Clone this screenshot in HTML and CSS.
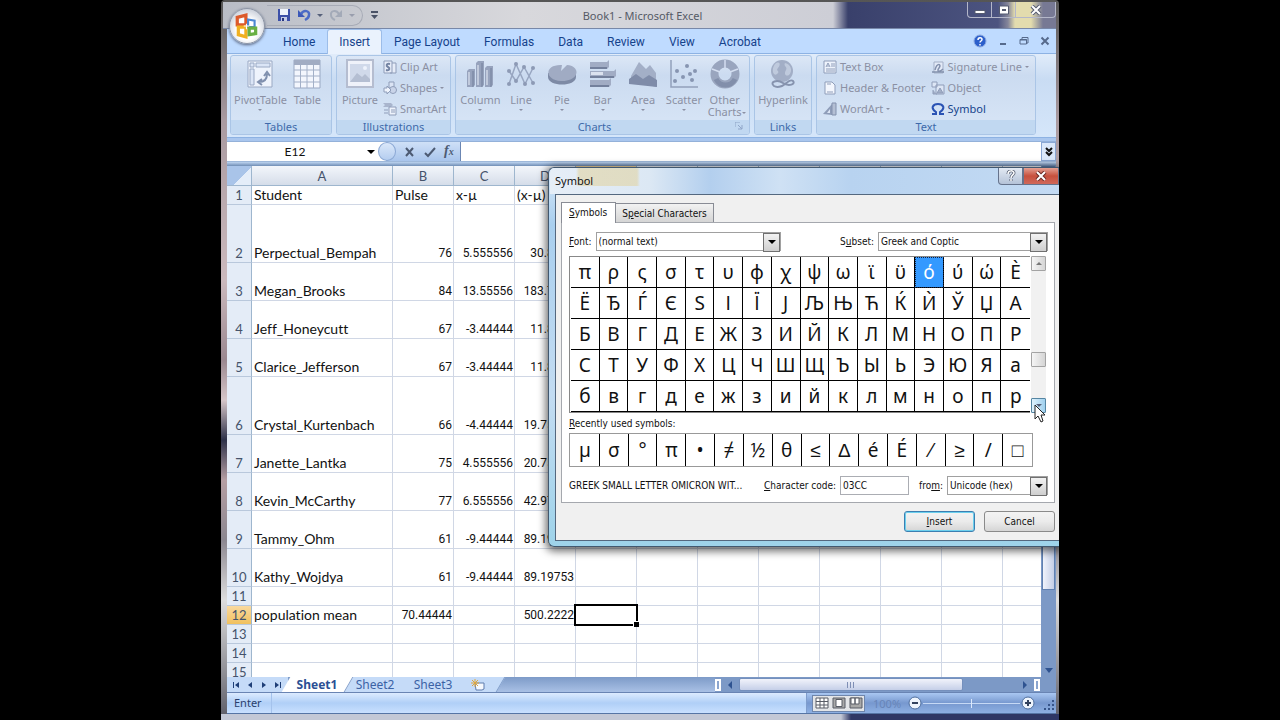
FILE: index.html
```html
<!DOCTYPE html>
<html lang="en">
<head>
  <meta charset="UTF-8">
  <meta name="viewport" content="width=device-width, initial-scale=1.0">
  <title>Book1 - Microsoft Excel</title>
  <link rel="stylesheet" href="styles.css">
</head>
<body>

<div class="window">

  <header class="titlebar">
    <div class="quick-access">
      <button aria-label="Save"><svg width="14" height="14" viewBox="0 0 14 14"><path d="M1 1h12v12H1z" fill="#3c50a8"/><path d="M3 1h8v6H3z" fill="#eef3fb"/><path d="M4 9h6v4H4z" fill="#c4cce6"/><path d="M5 10h2v3H5z" fill="#27357c"/></svg></button>
      <button aria-label="Undo"><svg width="14" height="14" viewBox="0 0 14 14"><path d="M1 2v7h7z" fill="#3b58b8"/><path d="M4 6c3-5 9-3 8 1 0 3-2 4-4 5" fill="none" stroke="#4a6ac6" stroke-width="2.500"/></svg></button>
      <i class="caret"></i>
      <button aria-label="Redo"><svg width="14" height="14" viewBox="0 0 14 14"><path d="M13 2v7H6z" fill="#a3aab8"/><path d="M10 6C7 1 1 3 2 7c0 3 2 4 4 5" fill="none" stroke="#a3aab8" stroke-width="2"/></svg></button>
      <i class="caret faded"></i>
    </div>
    <svg class="customize" width="7" height="8" viewBox="0 0 7 8"><path d="M0 0h7v2H0zM0 4h7L3.500 8z" fill="#4a5266"/></svg>
    <h1>Book1 - Microsoft Excel</h1>
    <div class="window-buttons">
      <button aria-label="Minimize"><svg width="12" height="10" viewBox="0 0 12 10"><path d="M1 5.500h10v3H1z" fill="#fff" stroke="#555b70"/></svg></button>
      <button aria-label="Maximize"><svg width="12" height="10" viewBox="0 0 12 10"><path d="M1.500 1h9v8h-9z" fill="#fff" stroke="#555b70"/><path d="M4 4h4v2H4z" fill="#555b70"/></svg></button>
      <button aria-label="Close"><svg width="12" height="10" viewBox="0 0 12 10"><path d="M2 1l8 8M10 1L2 9" stroke="#555b70" stroke-width="4"/><path d="M2 1l8 8M10 1L2 9" stroke="#fff" stroke-width="2"/></svg></button>
    </div>
  </header>

  <button class="office-button" aria-label="Office Button">
    <svg width="26" height="26" viewBox="0 0 24 24" fill="none" stroke-width="3">
      <path d="M3 4l8-2v9H3z" stroke="#dc5a2c"/>
      <path d="M13 6l6 1v6h-6z" stroke="#4c87d3" stroke-width="2"/>
      <path d="M4 13h7v9l-7-2z" stroke="#f0b020"/>
      <path d="M14 14h6v5l-6 1z" stroke="#68b043"/>
      <path d="M9 12h5M11.500 10v5" stroke="#fff" stroke-width="1"/>
    </svg>
  </button>

  <nav class="tabs">
    <button>Home</button>
    <button class="active">Insert</button>
    <button>Page Layout</button>
    <button>Formulas</button>
    <button>Data</button>
    <button>Review</button>
    <button>View</button>
    <button>Acrobat</button>
    <div class="book-buttons">
      <button aria-label="Help"><svg width="14" height="14" viewBox="0 0 14 14"><circle cx="7" cy="7" r="6" fill="#2c5fcb" stroke="#8ba9e0"/><path d="M5 6c0-3 4-3 4-.5C9 7 7 7 7 8.500M7 10v1.500" fill="none" stroke="#fff" stroke-width="1.500"/></svg></button>
      <button aria-label="Minimize workbook"><svg width="10" height="10" viewBox="0 0 10 10"><path d="M2 8h6" stroke="#566a8c" stroke-width="2"/></svg></button>
      <button aria-label="Restore workbook"><svg width="10" height="10" viewBox="0 0 10 10"><path d="M3 3V1.500h6V7H7.500M1 3.500h6.500V8H1zM1 4h7" fill="none" stroke="#566a8c"/></svg></button>
      <button aria-label="Close workbook"><svg width="10" height="10" viewBox="0 0 10 10"><path d="M1.500 1.500l7 7M8.500 1.500l-7 7" stroke="#566a8c" stroke-width="2"/></svg></button>
    </div>
  </nav>

  <section class="ribbon">
    <div class="group tables">
      <div class="tools">
        <button class="big"><svg width="28" height="30" viewBox="0 0 28 30"><path d="M2 2h24v26H2z" fill="#eef3fc" stroke="#9aa9c4"/><path d="M4 4h4v4H4zM10 4h14v4H10zM4 10h4v16H4z" fill="#dbe5f6" stroke="#9aa9c4"/><path d="M13 23c6 0 8-3 8-8M18 17l3-4 3 4M16 20l-4 3 4 3" fill="none" stroke="#8090ae" stroke-width="2"/></svg>PivotTable<i class="caret"></i></button>
        <button class="big"><svg width="28" height="30" viewBox="0 0 28 30"><path d="M1 1h26v28H1z" fill="#f3f6fd" stroke="#9aa9c4"/><path d="M1 1h26v5H1z" fill="#a1acc3"/><path d="M1 11h26M1 17h26M1 23h26M7.500 6v23M14 6v23M20.500 6v23" stroke="#a3b0c8"/></svg>Table</button>
      </div>
      <h2>Tables</h2>
    </div>
    <div class="group illustrations">
      <div class="tools">
        <button class="big"><svg width="28" height="30" viewBox="0 0 28 30"><path d="M1 1h26v27H1z" fill="#eff2fa" stroke="#b5bdd0" stroke-width="2"/><path d="M4 5h20v18H4z" fill="#d0d9ea"/><path d="M4 23l7-9 5 4 3-3 5 5v3z" fill="#b4bed2"/><circle cx="19" cy="9" r="2" fill="#eef3fc"/></svg>Picture</button>
        <div class="stack">
          <button><svg width="14" height="14" viewBox="0 0 14 14"><path d="M1 1h8v12H1zM9 3h4v10H7" fill="#e6ecf8" stroke="#8f9db9"/><path d="M7 4c-4-1-4 2-2 3s2 4-2 3" fill="none" stroke="#7484a3" stroke-width="2"/></svg>Clip Art</button>
          <button><svg width="14" height="14" viewBox="0 0 14 14"><path d="M6 1h5v6H6z" fill="#dbe4f4" stroke="#8f9db9"/><circle cx="10" cy="9" r="3.500" fill="#c9d4e9" stroke="#8f9db9"/><path d="M1 7h3V5l4 4-4 4v-2H1z" fill="#eef3fc" stroke="#8f9db9"/></svg>Shapes<i class="caret"></i></button>
          <button><svg width="14" height="14" viewBox="0 0 14 14"><path d="M0 1h8l2 2-2 2H0l2-2z" fill="#a9b5cd"/><path d="M6 5h7v8H6z" fill="#eef3fc" stroke="#8f9db9"/><path d="M8 8h4M8 10h4M1 8h4M1 11h4" stroke="#8f9db9"/></svg>SmartArt</button>
        </div>
      </div>
      <h2>Illustrations</h2>
    </div>
    <div class="group charts">
      <div class="tools">
        <button class="big"><svg width="30" height="30" viewBox="0 0 30 30" fill="#97a3bd"><path d="M2 12l2-2h6v16l-2 2H2z"/><path d="M11 4l2-2h6v24l-2 2h-6z"/><path d="M20 9l2-2h6v19l-2 2h-6z"/><path d="M8 12v16M17 4v24M26 9v19" stroke="#73809c"/><path d="M4 13v13M13 6v20M22 11v15" stroke="#c1cadc" stroke-width="2"/></svg>Column<i class="caret"></i></button>
        <button class="big"><svg width="30" height="30" viewBox="0 0 30 30" fill="none" stroke="#98a6c1" stroke-width="1.500"><path d="M3 25L10 5l9 20 8-16M3 12l7 10 8-14 9 16"/><g fill="#8d9ab5" stroke="none"><circle cx="3" cy="25" r="2"/><circle cx="10" cy="5" r="2"/><circle cx="19" cy="25" r="2"/><circle cx="27" cy="9" r="2"/><circle cx="3" cy="12" r="2"/><circle cx="10" cy="22" r="2"/><circle cx="18" cy="8" r="2"/><circle cx="27" cy="24" r="2"/></g></svg>Line<i class="caret"></i></button>
        <button class="big"><svg width="30" height="30" viewBox="0 0 30 30"><path d="M1 14v4c0 10 28 10 28 0v-4z" fill="#7d8aa5"/><path d="M14 12l1-6C-3 5-3 21 14 22c19 0 20-15 6-16z" fill="#a0abc3"/></svg>Pie<i class="caret"></i></button>
        <button class="big"><svg width="30" height="30" viewBox="0 0 30 30"><path d="M2 3h17l2-2v7l-2 2H2zM2 12h24l2-2v7l-2 2H2zM2 21h19l2-2v7l-2 2H2z" fill="#a1acc4"/><path d="M2 9h17M2 18h24M2 27h19" stroke="#73809c" stroke-width="2"/><path d="M3 13h12v3H3z" fill="#dbe2ef"/></svg>Bar<i class="caret"></i></button>
        <button class="big"><svg width="30" height="30" viewBox="0 0 30 30"><path d="M3 17L11 3l7 7 4-4 6 8v14l-7-2-18-2z" fill="#a3afc7"/><path d="M1 20l7-5 7 5 6-4 8 5v7L1 25z" fill="#7f8ca9"/></svg>Area<i class="caret"></i></button>
        <button class="big"><svg width="30" height="30" viewBox="0 0 30 30"><path d="M2 1v27h27" fill="none" stroke="#92a0bb" stroke-width="1.500"/><g fill="#8795b1"><circle cx="6" cy="22" r="2"/><circle cx="8" cy="12" r="2"/><circle cx="14" cy="18" r="2"/><circle cx="18" cy="7" r="2"/><circle cx="21" cy="15" r="2"/><circle cx="26" cy="12" r="2"/><circle cx="23" cy="21" r="2"/></g></svg>Scatter<i class="caret"></i></button>
        <button class="big"><svg width="30" height="30" viewBox="0 0 30 30" fill="none"><circle cx="15" cy="15" r="10.500" stroke="#99a5be" stroke-width="8"/><path d="M6 20c4 8 15 8 19 0" stroke="#828fab" stroke-width="5"/><path d="M15 1v9M2 10l8 3M28 10l-8 3" stroke="#d4def0" stroke-width="1.500"/></svg>Other<br>Charts<i class="caret inline"></i></button>
      </div>
      <h2>Charts<svg class="launcher" width="8" height="8" viewBox="0 0 8 8"><path d="M0 5V0h5M3 3l4 4M7 3v4H3" fill="none" stroke="#8fa5c8"/></svg></h2>
    </div>
    <div class="group links">
      <div class="tools">
        <button class="big"><svg width="30" height="30" viewBox="0 0 30 30"><circle cx="14" cy="12" r="11" fill="#a2aec6"/><path d="M7 5c5-4 6 1 3 4s3 3-1 6-6-5-2-10zM17 4c6 1 8 8 4 12-4 2-5-2-3-5s-3-4-1-7z" fill="#bfcadd"/><path d="M6 27c-5-4 3-7 9-3s13 1 10-2-8 4-11 5-5 2-8 0z" fill="none" stroke="#8693ae" stroke-width="2"/></svg>Hyperlink</button>
      </div>
      <h2>Links</h2>
    </div>
    <div class="group text">
      <div class="tools">
        <div class="stack">
          <button><svg width="14" height="14" viewBox="0 0 14 14"><path d="M1 1h12v12H1z" fill="#eef3fc" stroke="#8f9db9"/><path d="M3 7l2-4 2 4M4 6h2M8 4h4M8 6h4M3 9h9M3 11h9" fill="none" stroke="#8f9db9"/></svg>Text Box</button>
          <button><svg width="14" height="14" viewBox="0 0 14 14"><path d="M2 1h7l3 3v9H2z" fill="#f3f6fd" stroke="#8f9db9"/><path d="M4 3h4M4 11h6" stroke="#8f9db9"/></svg>Header &amp; Footer</button>
          <button><svg width="14" height="14" viewBox="0 0 14 14"><path d="M0 12L9 2v11z" fill="#8f9db9"/><path d="M9 1h4v12H9z" fill="#b4bfd4" stroke="#8391ad"/><path d="M4 11l3-4v4z" fill="#dbe4f4"/></svg>WordArt<i class="caret"></i></button>
        </div>
        <div class="stack">
          <button><svg width="14" height="14" viewBox="0 0 14 14"><path d="M3 2h9v11H3z" fill="#e3eaf7" stroke="#a3afc7"/><path d="M1 12h12M4 10c2-8 7-6 4-2s1 4 4 1" fill="none" stroke="#8391ad" stroke-width="1.500"/></svg>Signature Line<i class="caret"></i></button>
          <button><svg width="14" height="14" viewBox="0 0 14 14"><path d="M1 1h5v5H1zM5 4h8v9H5z" fill="#dde6f5" stroke="#8f9db9"/><path d="M6 12l3-5 3 5zM2 9v4h4" fill="#a3afc7" stroke="#8f9db9"/></svg>Object</button>
          <button class="enabled"><svg width="14" height="14" viewBox="0 0 14 14"><path d="M1 12h4v-2C-1 6 2 2 7 2s8 4 2 8v2h4" fill="none" stroke="#2b53b4" stroke-width="2"/></svg>Symbol</button>
        </div>
      </div>
      <h2>Text</h2>
    </div>
  </section>

  <div class="formula-bar">
    <input class="name-box" type="text" value="E12" aria-label="Name Box">
    <button class="name-arrow" aria-label="Names"><i class="caret dark"></i></button>
    <div class="formula-buttons">
      <i class="knob"></i>
      <button aria-label="Cancel entry"><svg width="12" height="12" viewBox="0 0 12 12"><path d="M2 2l7 8M9 2l-7 8" stroke="#4c5a72" stroke-width="2"/></svg></button>
      <button aria-label="Enter entry"><svg width="12" height="12" viewBox="0 0 12 12"><path d="M1 7l3 3 7-8" fill="none" stroke="#4c5a72" stroke-width="2"/></svg></button>
      <button class="fx">f<small>x</small></button>
    </div>
    <input class="formula" type="text" aria-label="Formula">
    <button class="expand" aria-label="Expand formula bar"><svg width="8" height="10" viewBox="0 0 8 10"><path d="M1 1l3 3 3-3M1 5l3 3 3-3" fill="none" stroke="#111" stroke-width="2"/></svg></button>
  </div>

  <main class="workbook">
    <div class="sheet">
      <table>
        <colgroup id="cols"></colgroup>
        <thead><tr id="letters"></tr></thead>
        <tbody id="rows"></tbody>
      </table>
    </div>
    <div class="vscroll">
      <i class="thumb"></i>
      <i class="caret"></i>
    </div>
  </main>

  <div class="sheet-bar">
    <div class="sheet-nav">
      <button aria-label="First sheet"><svg width="8" height="8" viewBox="0 0 8 8"><path d="M1 1h1v6H1zM7 1v6L3 4z" fill="#1f3f77"/></svg></button>
      <button aria-label="Previous sheet"><svg width="8" height="8" viewBox="0 0 8 8"><path d="M6 1v6L2 4z" fill="#1f3f77"/></svg></button>
      <button aria-label="Next sheet"><svg width="8" height="8" viewBox="0 0 8 8"><path d="M2 1v6l4-3z" fill="#1f3f77"/></svg></button>
      <button aria-label="Last sheet"><svg width="8" height="8" viewBox="0 0 8 8"><path d="M1 1v6l4-3zM6 1h1v6H6z" fill="#1f3f77"/></svg></button>
    </div>
    <button class="sheet-tab active"><span>Sheet1</span></button>
    <button class="sheet-tab"><span>Sheet2</span></button>
    <button class="sheet-tab"><span>Sheet3</span></button>
    <button class="sheet-tab new" aria-label="Insert worksheet"><svg width="14" height="12" viewBox="0 0 14 12"><path d="M4 4h9v6l-2 1H5z" fill="#f5f8fd" stroke="#5f7cad"/><path d="M4 0v8M0 4h8M1 1l6 6M7 1L1 7" stroke="#e0a63a"/></svg></button>
    <div class="hscroll">
      <i class="split"></i>
      <svg width="8" height="8" viewBox="0 0 8 8"><path d="M6 0v8L2 4z" fill="#2f5390"/></svg>
      <div class="track"><i class="thumb"></i></div>
      <svg width="8" height="8" viewBox="0 0 8 8"><path d="M2 0v8l4-4z" fill="#2f5390"/></svg>
      <i class="split"></i>
    </div>
  </div>

  <footer class="status">
    <span class="mode">Enter</span>
    <div class="view">
      <div class="view-buttons">
        <button aria-label="Normal"><svg width="14" height="12" viewBox="0 0 14 12"><path d="M1 1h12v10H1zM1 4.500h12M1 8h12M5 1v10M9 1v10" fill="#fff" stroke="#585c66"/></svg></button>
        <button aria-label="Page Layout"><svg width="14" height="12" viewBox="0 0 14 12"><path d="M1 1h12v10H1z" fill="#a8a8a8" stroke="#585c66"/><path d="M4 2.500h6v7H4z" fill="#fff" stroke="#585c66"/></svg></button>
        <button aria-label="Page Break Preview"><svg width="14" height="12" viewBox="0 0 14 12"><path d="M1 1h12v10H1z" fill="#a8a8a8" stroke="#585c66"/><path d="M2 1h4v6H2zM6 1h4v6H6z" fill="#fff" stroke="#585c66"/></svg></button>
      </div>
      <span class="percent">100%</span>
      <button class="zoom-button" aria-label="Zoom out"><svg width="14" height="14" viewBox="0 0 14 14"><circle cx="7" cy="7" r="6" fill="#eef4fd" stroke="#4f6f9f"/><path d="M4 7h6" stroke="#33425f" stroke-width="2"/></svg></button>
      <input class="zoom" type="range" aria-label="Zoom">
      <button class="zoom-button" aria-label="Zoom in"><svg width="14" height="14" viewBox="0 0 14 14"><circle cx="7" cy="7" r="6" fill="#eef4fd" stroke="#4f6f9f"/><path d="M4 7h6M7 4v6" stroke="#33425f" stroke-width="2"/></svg></button>
      <svg class="grip" width="12" height="12" viewBox="0 0 12 12" fill="#36548a"><path d="M9 1h2v2H9zM9 5h2v2H9zM5 5h2v2H5zM9 9h2v2H9zM5 9h2v2H5zM1 9h2v2H1z"/></svg>
    </div>
  </footer>

  <!-- Insert > Symbol -->
  <div class="dialog" role="dialog" aria-labelledby="dialog-title">
    <div class="dialog-title">
      <h2 id="dialog-title">Symbol</h2>
      <button class="help" aria-label="Help"><svg width="10" height="12" viewBox="0 0 10 12" fill="none"><path d="M2 4c0-4 6-4 6-1 0 2-3 2-3 5M5 9v2" stroke="#555d70" stroke-width="3"/><path d="M2 4c0-4 6-4 6-1 0 2-3 2-3 5M5 9v2" stroke="#fff" stroke-width="1.500"/></svg></button>
      <button class="close" aria-label="Close"><svg width="12" height="10" viewBox="0 0 12 10"><path d="M2 1l8 8M10 1L2 9" stroke="#6b2a25" stroke-width="4"/><path d="M2 1l8 8M10 1L2 9" stroke="#fff" stroke-width="2"/></svg></button>
    </div>
    <div class="dialog-body">
      <div class="dialog-tabs">
        <button class="active"><u>S</u>ymbols</button>
        <button>S<u>p</u>ecial Characters</button>
      </div>
      <div class="panel">
        <div class="field-row">
          <label for="font"><u>F</u>ont:</label>
          <span class="select font"><select id="font"><option>(normal text)</option></select></span>
          <label class="push" for="subset">S<u>u</u>bset:</label>
          <span class="select subset"><select id="subset"><option>Greek and Coptic</option></select></span>
        </div>
        <div class="symbols">
          <div class="symbol-grid" id="symbols"></div>
          <div class="symbol-scroll">
            <button aria-label="Scroll up"><i class="caret up"></i></button>
            <i class="thumb"></i>
            <button class="hot" aria-label="Scroll down"><i class="caret"></i></button>
          </div>
        </div>
        <p class="recent-label"><u>R</u>ecently used symbols:</p>
        <div class="symbol-grid recent" id="recent"></div>
        <div class="field-row code-row">
          <span class="char-name">GREEK SMALL LETTER OMICRON WIT...</span>
          <label for="code"><u>C</u>haracter code:</label>
          <input id="code" type="text" value="03CC">
          <label class="push" for="from">fro<u>m</u>:</label>
          <span class="select from"><select id="from"><option>Unicode (hex)</option></select></span>
        </div>
      </div>
      <div class="actions">
        <button class="default"><u>I</u>nsert</button>
        <button>Cancel</button>
      </div>
    </div>
    <svg class="pointer" width="12" height="19" viewBox="0 0 12 19"><path d="M1 1v14l3-3 3 6 2-1-2-6h4z" fill="#fff" stroke="#222"/></svg>
  </div>

</div>

<script src="script.js"></script>
</body>
</html>
```
FILE: styles.css
```css
* {
  box-sizing: border-box;
}

body {
  margin: 0;
  background: black;
  font-family: "Noto Sans", sans-serif;
  font-size: 11px;
  color: #111;
}

button, input, select {
  font: inherit;
  color: inherit;
  margin: 0;
  padding: 0;
  border: none;
  background: none;
}

h1, h2, p {
  margin: 0;
  font-size: 11px;
  font-weight: normal;
}

svg {
  display: block;
  flex: none;
}

.caret {
  flex: none;
  width: 0;
  height: 0;
  border: 3px solid transparent;
  border-top-color: #56607a;
  border-bottom: none;
}

.caret.dark {
  border-width: 4px 4px 0;
  border-top-color: #000;
}

.caret.faded {
  opacity: 0.4;
}

.caret.up {
  border: 3px solid transparent;
  border-bottom-color: #777;
  border-top: none;
}

/* window frame */

.window {
  position: relative;
  display: flex;
  flex-direction: column;
  width: 100%;
  max-width: 838px;
  height: 100vh;
  margin: 0 auto;
  padding: 2px 3px 6px 6px;
  overflow: hidden;
  border-radius: 4px 4px 0 0;
  background:
    linear-gradient(90deg, #c3c8d6 220px, #c3c8d6 620px, #2f3765 630px) bottom / 100% 6px no-repeat,
    linear-gradient(#555 0, #a99aa0 120px, #cbb9bd 280px, #9b8890 360px, #d6c6c9 400px, #2d3149 440px, #b59ea3 480px, #8b8790 540px, #ddd 600px, #5b5b66 100%);
}

/* title bar */

.titlebar {
  flex: none;
  display: flex;
  align-items: center;
  height: 27px;
  margin-left: -4px;
  padding-left: 44px;
  border-bottom: 1px solid #7888a8;
  background: linear-gradient(90deg, #b9bdc6 0, #d8d8dc 300px, #cdced6 610px, #39406b 625px, #4c5480 775px, #85869a 785px, #e3dcae 792px, #e3dcae 808px, #777994 820px);
}

.quick-access {
  display: flex;
  align-items: center;
  gap: 6px;
  width: 96px;
  height: 21px;
  padding-left: 10px;
  border: 1px solid #a7abb6;
  border-left: none;
  border-radius: 0 11px 11px 0;
}

.customize {
  margin-left: 8px;
}

.titlebar h1 {
  flex: 1;
  padding-right: 60px;
  text-align: center;
  color: #555a66;
}

.window-buttons {
  display: flex;
  align-self: flex-start;
  width: 89px;
  height: 16px;
  border: 1px solid #b4b7c9;
  border-top: none;
  border-radius: 0 0 4px 4px;
}

.window-buttons button {
  display: flex;
  align-items: center;
  justify-content: center;
  width: 24px;
  border-right: 1px solid #b4b7c9;
}

.window-buttons button:last-child {
  flex: 1;
  border-right: none;
}

.office-button {
  position: absolute;
  z-index: 2;
  top: 8px;
  left: 8px;
  display: flex;
  align-items: center;
  justify-content: center;
  width: 36px;
  height: 36px;
  border: 1px solid #8d95a5;
  border-radius: 50%;
  background: radial-gradient(circle at 50% 60%, #fff 40%, #cdd2dc 75%);
  box-shadow: 0 1px 3px #57617b;
}

/* ribbon tabs */

.tabs {
  flex: none;
  display: flex;
  align-items: stretch;
  height: 25px;
  padding-left: 44px;
  background: #bfdbff;
  border-bottom: 1px solid #8db2e3;
  font-family: Roboto, sans-serif;
  font-size: 12px;
}

.tabs > button {
  padding: 1px 12px 0;
  color: #15428b;
}

.tabs > button.active {
  padding: 0 11px;
  background: #eaf2fd;
  border: 1px solid #9cbde9;
  border-bottom: none;
  border-radius: 3px 3px 0 0;
  margin-bottom: -1px;
}

.book-buttons {
  display: flex;
  align-items: center;
  gap: 11px;
  margin-left: auto;
  padding-right: 6px;
}

/* ribbon */

.ribbon {
  flex: none;
  display: flex;
  gap: 4px;
  height: 84px;
  padding: 1px 20px 2px 3px;
  background: linear-gradient(#e1ecfa, #c9dcf3 30%, #d5e6fa);
  border-bottom: 1px solid #8db2e3;
}

.group {
  display: flex;
  flex-direction: column;
  flex: none;
  border: 1px solid #aac5e6;
  border-radius: 3px;
  overflow: hidden;
  background: linear-gradient(#dce7f6, #cbdbf0 25%, #d5e3f5 80%);
}

.tables { width: 102px; }
.illustrations { width: 115px; }
.charts { width: 295px; }
.links { width: 58px; }
.group.text { flex: 1; }

.group h2 {
  position: relative;
  height: 14px;
  line-height: 14px;
  text-align: center;
  color: #3e6aaa;
  background: #c1d8f1;
}

.charts h2 {
  padding-right: 16px;
}

.launcher {
  position: absolute;
  top: 2px;
  right: 6px;
}

.tools {
  flex: 1;
  display: flex;
  color: #8b90a3;
}

.tools .caret {
  border-width: 2px 2px 0;
  border-top-color: #8b90a3;
}

.big {
  flex: 1;
  display: flex;
  flex-direction: column;
  align-items: center;
  padding-top: 3px;
  line-height: 12px;
  white-space: nowrap;
}

.big svg {
  margin-bottom: 5px;
}

.big .caret {
  margin-top: 3px;
}

.big .caret.inline {
  margin: -6px 0 0 38px;
}

.tables .tools {
  padding: 0 3px;
}

.charts .tools {
  padding: 0 4px;
}

.charts .big {
  width: 40px;
  flex: 1 0 40px;
}

.stack {
  display: flex;
  flex-direction: column;
}

.stack button {
  display: flex;
  align-items: center;
  gap: 3px;
  height: 21px;
  white-space: nowrap;
}

.stack button.enabled {
  color: #15428b;
}

.illustrations .stack {
  width: 67px;
}

.group.text .tools {
  padding-left: 6px;
  gap: 5px;
}

/* formula bar */

.formula-bar {
  flex: none;
  display: flex;
  height: 28px;
  padding: 4px 0 5px;
  background: linear-gradient(#a9c6ee 3px, #7f9cc4 4px, #7f9cc4 23px, #bdd4f0 24px, #6f8db5);
}

.name-box {
  width: 136px;
  padding: 0;
  text-align: center;
  font-family: Lato, sans-serif;
  font-size: 12px;
  background: #fff;
}

.name-arrow {
  width: 15px;
  display: flex;
  align-items: center;
  justify-content: center;
  background: #fff;
}

.formula-buttons {
  display: flex;
  align-items: center;
  gap: 8px;
  width: 83px;
  border-right: 1px solid #6b86b3;
  background: linear-gradient(90deg, #fff 8px, transparent 8px), linear-gradient(#cfe0f7, #a9c5ec);
}

.knob {
  width: 18px;
  height: 19px;
  border: 1px solid #8ba8d4;
  border-radius: 50%;
  background: linear-gradient(#dbe8fa, #b4cdef);
}

.fx {
  font: italic bold 14px "Liberation Serif", serif;
  line-height: 14px;
  color: #4c5a72;
}

.fx small {
  font-size: 10px;
}

.formula {
  flex: 1;
  background: #fff;
}

.expand {
  display: flex;
  align-items: center;
  justify-content: center;
  width: 15px;
  border: 1px solid #8aa7d4;
  background: #dbe8fa;
}

/* sheet */

.workbook {
  flex: 1;
  display: flex;
  min-height: 0;
  font-family: Lato, sans-serif;
}

.sheet {
  flex: 1;
  overflow: hidden;
  background: #fff;
}

table {
  table-layout: fixed;
  width: 0;
  border-collapse: separate;
  border-spacing: 0;
  font-size: 14px;
  font-variant-ligatures: none;
  line-height: 16px;
}

.col-head { width: 25px; }
.col-wide { width: 141px; }
.col { width: 61px; }

th {
  padding: 0 0 1px;
  font-size: 13px;
  font-weight: normal;
  color: #45536b;
  vertical-align: bottom;
  background: #e4ecf7;
  border-right: 1px solid #9eb6ce;
  border-bottom: 1px solid #b9c8dc;
}

thead th {
  height: 20px;
  background: linear-gradient(#f3f6fb, #d5dde9);
  border-bottom-color: #9eb6ce;
}

thead th.corner {
  background: linear-gradient(135deg, #a9c4e9 60%, #e4edf9 60%);
}

td {
  padding: 0 2px 1px;
  vertical-align: bottom;
  white-space: nowrap;
  border-right: 1px solid #d0d7e5;
  border-bottom: 1px solid #d0d7e5;
}

td.number {
  padding: 0 1px 1px;
  text-align: right;
  font-family: Roboto, sans-serif;
  font-size: 12px;
}

th.current {
  background: linear-gradient(#f9d99f, #f1c15f);
}

td.selected {
  position: relative;
}

/* cell cursor sits over the grid lines */
td.selected::before {
  content: "";
  position: absolute;
  inset: -2px;
  border: 2px solid #000;
}

td.selected::after {
  content: "";
  position: absolute;
  right: -3px;
  bottom: -3px;
  width: 5px;
  height: 5px;
  border: 1px solid #fff;
  border-width: 1px 0 0 1px;
  background: #000;
}

.one { height: 19px; }
.two { height: 38px; }
.three { height: 58px; }

.vscroll {
  display: flex;
  flex-direction: column;
  align-items: center;
  justify-content: space-between;
  width: 15px;
  padding-bottom: 4px;
  background: #7c99c6;
}

.vscroll .thumb {
  width: 13px;
  height: 424px;
  border: 1px solid #6080b0;
  background: linear-gradient(90deg, #f0f3fb, #c4cee6);
}

.vscroll .caret {
  border-width: 5px 4px 0;
  border-top-color: #2f5390;
}

/* sheet tabs */

.sheet-bar {
  flex: none;
  display: flex;
  height: 16px;
  border-bottom: 1px solid #6984b3;
  background: linear-gradient(#7d9bc8, #a9c0e5);
  font-size: 12px;
  color: #3b62a5;
}

.sheet-nav {
  display: flex;
  align-items: center;
  gap: 6px;
  width: 61px;
  padding-left: 5px;
  background: #c5dbf8;
}

.sheet-tab {
  position: relative;
  width: 58px;
  line-height: 15px;
}

.sheet-tab::before {
  content: "";
  position: absolute;
  inset: 0 -3px 0 -2px;
  transform: skewX(-30deg);
  border-right: 1px solid #7f9cc9;
  background: #c5dbf8;
}

.sheet-tab span, .sheet-tab svg {
  position: relative;
}

.sheet-tab.active {
  z-index: 1;
  font-weight: bold;
  color: #2b4f94;
}

.sheet-tab.active::before {
  background: #fff;
}

.sheet-tab.new {
  width: 36px;
  padding-left: 9px;
}

.hscroll {
  display: flex;
  align-items: center;
  gap: 3px;
  width: 341px;
  margin-left: auto;
  padding: 0 16px 0 0;
  background: #7c99c6;
}

.split {
  width: 6px;
  height: 12px;
  border: 2px solid #fff;
  background: #8ba5cf;
}

.hscroll > svg {
  margin: 0 2px;
}

.track {
  flex: 1;
  height: 100%;
}

.track .thumb {
  display: block;
  width: 81%;
  height: 13px;
  margin-top: 1px;
  border: 1px solid #7590bd;
  border-radius: 2px;
  background:
    repeating-linear-gradient(90deg, #7f8fb5 0 1px, transparent 1px 3px) center / 8px 6px no-repeat,
    linear-gradient(#f1f3fb, #c5cfe8);
}

/* status bar */

.status {
  flex: none;
  display: flex;
  align-items: stretch;
  height: 21px;
  border-bottom: 1px solid #5675a5;
  background: linear-gradient(#dcebff, #b0cff7 50%, #c9e0ff);
  color: #2a3f6d;
}

.mode {
  width: 45px;
  padding-left: 7px;
  line-height: 19px;
  border-right: 1px solid #a4c2ec;
}

.view {
  display: flex;
  align-items: center;
  width: 250px;
  margin-left: auto;
  padding: 0 1px 0 5px;
  border-left: 1px solid #7f9dcc;
  background: linear-gradient(#a9c7f2, #7798cf 50%, #8eb0e3);
}

.view-buttons {
  display: flex;
  align-items: center;
  justify-content: space-around;
  width: 53px;
  height: 17px;
  border: 1px solid #6f86ac;
  background: #e3e5e8;
}

.percent {
  width: 43px;
  padding-left: 8px;
  color: #6785b8;
}

.zoom {
  appearance: none;
  flex: 1;
  min-width: 0;
  height: 9px;
  margin: 0 1px;
  background:
    linear-gradient(#dbe8fb, #dbe8fb) center / 1px 9px no-repeat,
    linear-gradient(#c6d9f5, #c6d9f5) center / 100% 1px no-repeat;
}

.zoom::-webkit-slider-thumb {
  appearance: none;
  width: 1px;
  height: 9px;
}

.grip {
  margin: 4px 0 0 8px;
}

/* symbol dialog */

.dialog {
  position: absolute;
  top: 167px;
  left: 327px;
  right: 0;
  padding: 0 0 5px 6px;
  border: 1px solid #42586f;
  border-right: none;
  border-radius: 6px 0 0 6px;
  background: linear-gradient(#d7e7f8, #a9cfee 15%, #c3dcf2 60%, #9ed3ea);
  box-shadow: 0 2px 8px 2px rgba(0, 0, 0, 0.6);
  font-family: "DejaVu Sans Condensed", Roboto, sans-serif;
  font-size: 10px;
}

.dialog p {
  font-size: 10px;
}

.dialog-title {
  display: flex;
  align-items: flex-start;
  height: 26px;
  margin-left: -5px;
  padding-left: 5px;
  border-radius: 5px 0 0;
  background:
    linear-gradient(90deg, transparent, rgba(225, 215, 175, 0.7) 3px, rgba(225, 215, 175, 0.7) 61px, transparent 64px) 26px 0 / 64px 18px no-repeat,
    linear-gradient(90deg, #e6eef7, #dce8f4 100px, #b3cfee 160px, #cfe1f4 230px, #b8d3f0 300px, #c3daf3);
}

.dialog-title h2 {
  flex: 1;
  font-family: "Noto Sans", sans-serif;
  line-height: 26px;
}

.dialog-title button {
  display: flex;
  align-items: center;
  justify-content: center;
  height: 17px;
  border: 1px solid #66738c;
  border-top: none;
}

.help {
  width: 25px;
  border-radius: 0 0 0 4px;
  background: linear-gradient(#e2e9f3, #b5c3d8);
}

.close {
  width: 36px;
  background: linear-gradient(#e3a093, #c7503d 50%, #d0685a);
}

.dialog-body {
  padding: 7px 4px 8px 5px;
  border: 1px solid #54687f;
  border-right: none;
  background: #f0f0f0;
}

.dialog-tabs {
  display: flex;
  align-items: flex-end;
}

.dialog-tabs button {
  height: 19px;
  padding: 0 6px;
  border: 1px solid #898c95;
  border-left: none;
  border-bottom: none;
  background: linear-gradient(#f2f2f2, #d5d5d5);
}

.dialog-tabs .active {
  position: relative;
  height: 21px;
  margin-bottom: -1px;
  padding: 0 8px 1px 7px;
  border-left: 1px solid #898c95;
  background: #fff;
}

.panel {
  padding: 9px 6px 7px 7px;
  border: 1px solid #a5a8ae;
  background: #fff;
}

.field-row {
  display: flex;
  align-items: center;
  height: 19px;
  white-space: nowrap;
}

.push {
  margin-left: auto;
}

.select {
  position: relative;
  height: 19px;
  margin-left: 4px;
  border: 1px solid #a0a0a0;
}

.select select {
  appearance: none;
  width: 100%;
  height: 17px;
  padding: 0 18px 0 2px;
  line-height: 17px;
}

/* drop-down button */
.select::before {
  content: "";
  position: absolute;
  top: 0;
  right: 0;
  width: 15px;
  height: 17px;
  border: 1px solid #707070;
  background: linear-gradient(#f2f2f2, #cfcfcf);
}

.select::after {
  content: "";
  position: absolute;
  top: 7px;
  right: 4px;
  border: 4px solid transparent;
  border-top-color: #000;
  border-bottom: none;
}

.font { width: 185px; }
.subset { width: 170px; }
.from { width: 101px; }

.symbols {
  display: flex;
  gap: 1px;
  margin-top: 5px;
}

.symbol-grid {
  flex: none;
  display: grid;
  grid-template-columns: repeat(16, 1fr);
  width: 461px;
  padding-left: 1px;
  border: 1px solid #888;
  border-right: none;
  font-family: "Noto Sans", sans-serif;
  font-size: 19px;
}

.symbol-grid button {
  height: 31px;
  line-height: 28px;
  border-right: 1px solid #000;
  border-bottom: 1px solid #000;
}

.symbol-grid button:nth-child(16n) {
  border-right: none;
}

.symbol-grid button.chosen {
  color: #fff;
  background: #3399ff;
  outline: 1px dotted #124;
  outline-offset: -1px;
}

.symbol-scroll {
  display: flex;
  flex-direction: column;
  width: 15px;
  background: #f1f1f1;
}

.symbol-scroll button, .symbol-scroll .thumb {
  display: flex;
  align-items: center;
  justify-content: center;
  height: 15px;
  border: 1px solid #a3a3a3;
  border-radius: 1px;
  background: linear-gradient(90deg, #f5f5f5, #d5d5d5);
}

.symbol-scroll .thumb {
  margin: auto 0 31px;
}

.symbol-scroll .hot {
  border-color: #5586a3;
  background: linear-gradient(90deg, #dff2fc, #9fd0ee);
}

.recent-label {
  margin: 3px 0 1px;
  line-height: 16px;
}

.recent {
  width: 464px;
  border: 1px solid #999;
}

.recent.symbol-grid button {
  height: 32px;
  line-height: 32px;
  border-bottom: none;
}

.code-row {
  margin-top: 9px;
}

.char-name {
  width: 195px;
}

.code-row input {
  width: 69px;
  height: 19px;
  margin-left: 4px;
  padding: 0 2px;
  border: 1px solid #abadb3;
}

.actions {
  display: flex;
  justify-content: flex-end;
  gap: 9px;
  margin-top: 8px;
}

.actions button {
  width: 71px;
  height: 21px;
  border: 1px solid #8a8a8a;
  border-radius: 3px;
  background: linear-gradient(#f3f3f3, #ebebeb 50%, #d5d5d5);
}

.actions .default {
  border-color: #3c7fb1;
  box-shadow: inset 0 0 0 1px #6cd0ee;
}

.pointer {
  position: absolute;
  top: 236px;
  left: 485px;
}
```
FILE: script.js
```js
const letters = ['A', 'B', 'C', 'D', 'E', 'F', 'G', 'H', 'I', 'J', 'K', 'L'];

const rows = [
  { size: 'one', cells: ['Student', 'Pulse', 'x-µ', '(x-µ)'] },
  { size: 'three', cells: ['Perpectual_Bempah', 76, '5.555556', '30.8642'] },
  { size: 'two', cells: ['Megan_Brooks', 84, '13.55556', '183.7531'] },
  { size: 'two', cells: ['Jeff_Honeycutt', 67, '-3.44444', '11.8642'] },
  { size: 'two', cells: ['Clarice_Jefferson', 67, '-3.44444', '11.8642'] },
  { size: 'three', cells: ['Crystal_Kurtenbach', 66, '-4.44444', '19.75309'] },
  { size: 'two', cells: ['Janette_Lantka', 75, '4.555556', '20.75309'] },
  { size: 'two', cells: ['Kevin_McCarthy', 77, '6.555556', '42.97531'] },
  { size: 'two', cells: ['Tammy_Ohm', 61, '-9.44444', '89.19753'] },
  { size: 'two', cells: ['Kathy_Wojdya', 61, '-9.44444', '89.19753'] },
  { size: 'one', cells: [] },
  { size: 'one', cells: ['population mean', '70.44444', '', '500.2222'] },
  { size: 'one', cells: [] },
  { size: 'one', cells: [] },
  { size: 'one', cells: [] }
];

document.getElementById('cols').innerHTML =
  '<col class="col-head"><col class="col-wide">' + '<col class="col">'.repeat(letters.length - 1);

document.getElementById('letters').innerHTML =
  '<th class="corner"></th>' +
  letters.map(l => `<th class="${l === 'E' ? 'current' : ''}">${l}</th>`).join('');

document.getElementById('rows').innerHTML = rows.map((row, r) => {
  const cells = letters.map((l, c) => {
    const value = row.cells[c] ?? '';
    let cls = value !== '' && !isNaN(value) ? 'number' : '';
    if (r === 11 && l === 'E') cls = 'selected';
    return `<td class="${cls}">${value}</td>`;
  }).join('');
  return `<tr class="${row.size}"><th class="${r === 11 ? 'current' : ''}">${r + 1}</th>${cells}</tr>`;
}).join('');

const symbols = 'πρςστυφχψωϊϋόύώЀЁЂЃЄЅІЇЈЉЊЋЌЍЎЏАБВГДЕЖЗИЙКЛМНОПРСТУФХЦЧШЩЪЫЬЭЮЯабвгдежзийклмнопр';
const recent = 'µσ°π•≠½θ≤∆éÉ⁄≥/□';

function fill(id, chars) {
  document.getElementById(id).innerHTML = [...chars].map(ch =>
    `<button${ch === 'ό' ? ' class="chosen"' : ''}>${ch}</button>`).join('');
}

fill('symbols', symbols);
fill('recent', recent);
```
